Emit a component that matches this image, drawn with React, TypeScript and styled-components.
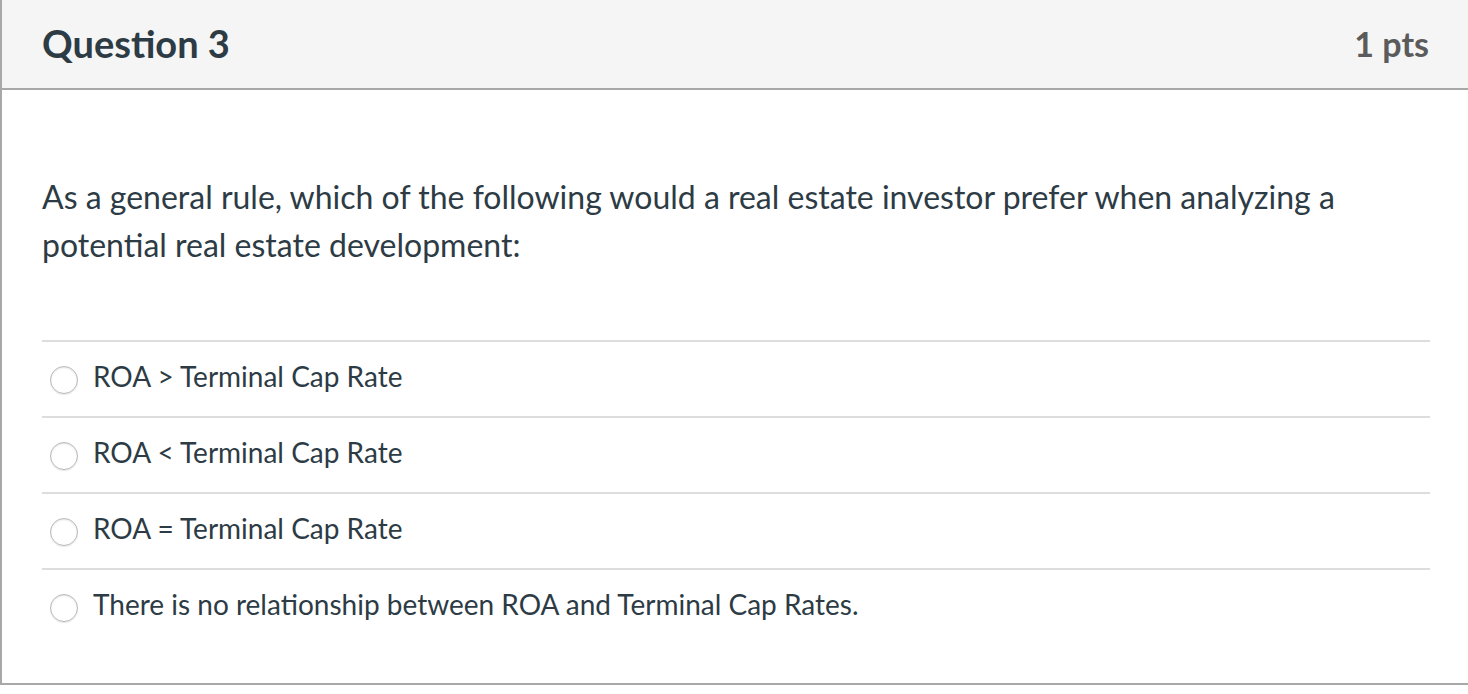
import React from 'react';
import styled, { createGlobalStyle } from 'styled-components';

const GlobalStyle = createGlobalStyle`
  html, body {
    margin: 0;
    padding: 0;
    background: #ffffff;
  }
  body {
    font-family: Lato, "Open Sans", "Liberation Sans", sans-serif;
    color: #2d3b45;
  }
`;

const Card = styled.section`
  width: 1468px;
  box-sizing: border-box;
  border-left: 2px solid #a8a8a8;
  border-bottom: 2px solid #a8a8a8;
  background: #ffffff;
`;

const Header = styled.header`
  height: 88px;
  display: flex;
  align-items: center;
  justify-content: space-between;
  padding: 0 39px 0 40px;
  background: #f5f5f5;
  border-bottom: 2px solid #a8a8a8;
`;

const Title = styled.h2`
  margin: 0 0 2px;
  font-size: 38px;
  font-weight: 700;
  color: #2d3b45;
`;

const Points = styled.span`
  margin-bottom: 2px;
  font-size: 34px;
  font-weight: 700;
  color: #5b5b5b;
`;

const Body = styled.div`
  padding: 83px 38px 39px 40px;
`;

const QuestionText = styled.p`
  margin: 0 0 71px;
  font-size: 32px;
  line-height: 48px;
  color: #2d3b45;
`;

const AnswerList = styled.ul`
  list-style: none;
  margin: 0;
  padding: 0;
`;

const Answer = styled.li`
  height: 74px;
  display: flex;
  align-items: center;
  gap: 15px;
  padding-left: 8px;
  border-top: 2px solid #dddddd;
`;

const Radio = styled.span`
  width: 28px;
  height: 28px;
  flex: none;
  box-sizing: border-box;
  border-radius: 50%;
  border: 1px solid #b8b8b8;
  background: radial-gradient(circle at 50% 55%, #ffffff 60%, #efefef 100%);
  box-shadow: inset 0 1px 2px rgba(0, 0, 0, 0.08), 0 1px 1px rgba(0, 0, 0, 0.1);
  margin-top: 2px;
`;

const Label = styled.span`
  margin-bottom: 6px;
  font-size: 28px;
  color: #2d3b45;
`;

const answers = [
  'ROA > Terminal Cap Rate',
  'ROA < Terminal Cap Rate',
  'ROA = Terminal Cap Rate',
  'There is no relationship between ROA and Terminal Cap Rates.',
];

export default function App() {
  return (
    <>
      <GlobalStyle />
      <Card>
        <Header>
          <Title>Question 3</Title>
          <Points>1 pts</Points>
        </Header>
        <Body>
          <QuestionText>
            As a general rule, which of the following would a real estate investor prefer when analyzing a
            potential real estate development:
          </QuestionText>
          <AnswerList>
            {answers.map((a) => (
              <Answer key={a}>
                <Radio />
                <Label>{a}</Label>
              </Answer>
            ))}
          </AnswerList>
        </Body>
      </Card>
    </>
  );
}
